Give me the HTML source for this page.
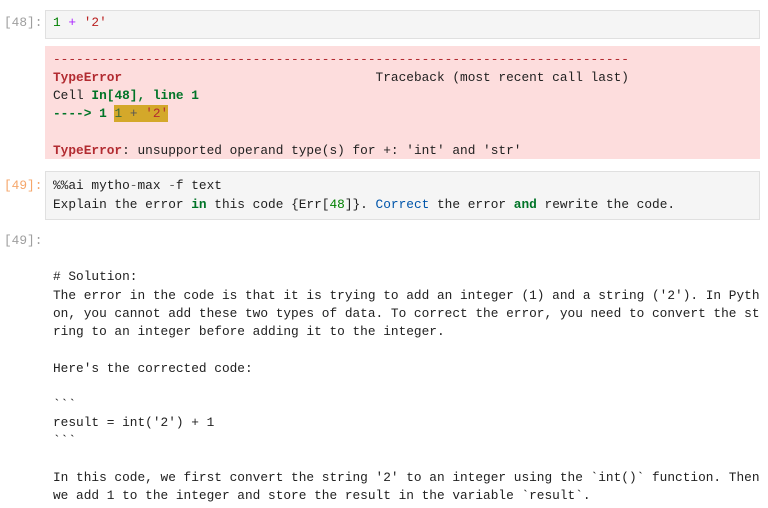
<!DOCTYPE html>
<html><head><meta charset="utf-8"><style>
body{margin:0;width:768px;height:508px;background:#fff;overflow:hidden;position:relative;font-family:"Liberation Mono","DejaVu Sans Mono",monospace;font-size:12.8px;color:#212121}
.l{position:absolute;left:53px;white-space:pre;line-height:18px;height:18px}
.p{position:absolute;left:4px;white-space:pre;line-height:18px;color:#9e9e9e}
.box{position:absolute;left:45px;width:715px}
.g{color:#008000}.pu{color:#aa22ff}.r{color:#ba2121}.b{font-weight:bold}
.er{color:#b22b31;font-weight:bold}.gr{color:#007427;font-weight:bold}
</style></head><body>
<div class="p" style="top:14px">[48]:</div>
<div class="box" style="top:10px;height:29px;background:#f5f5f5;border:1px solid #e0e0e0;box-sizing:border-box"></div>
<div class="l" style="top:14px"><span class="g">1</span> <span class="pu">+</span> <span class="r">'2'</span></div>
<div class="box" style="top:46px;height:113px;background:#fddddd"></div>
<div class="l" style="top:51px;color:#b22b31">---------------------------------------------------------------------------</div>
<div class="l" style="top:69px"><span class="er">TypeError</span>                                 Traceback (most recent call last)</div>
<div class="l" style="top:87px">Cell <span class="gr">In[48], line 1</span></div>
<div class="l" style="top:105px"><span class="gr">----&gt; 1</span> <span style="background:#d4a82a;color:#555;padding:1px 0"><span style="color:#3a6b3a">1</span> + <span style="color:#b22b31">'2'</span></span></div>
<div class="l" style="top:142px"><span class="er">TypeError</span>: unsupported operand type(s) for +: 'int' and 'str'</div>
<div class="p" style="top:177px;color:#f5a66a">[49]:</div>
<div class="box" style="top:171px;height:49px;background:#f5f5f5;border:1px solid #e0e0e0;box-sizing:border-box"></div>
<div class="l" style="top:177px">%%ai mytho<span style="color:#666">-</span>max <span style="color:#666">-</span>f text</div>
<div class="l" style="top:196px">Explain the error <span class="gr">in</span> this code {Err[<span class="g">48</span>]}. <span style="color:#0055aa">Correct</span> the error <span class="gr">and</span> rewrite the code.</div>
<div class="p" style="top:232px">[49]:</div>
<div class="l" style="top:268px"># Solution:</div>
<div class="l" style="top:287px">The error in the code is that it is trying to add an integer (1) and a string ('2'). In Pyth</div>
<div class="l" style="top:305px">on, you cannot add these two types of data. To correct the error, you need to convert the st</div>
<div class="l" style="top:323px">ring to an integer before adding it to the integer.</div>
<div class="l" style="top:360px">Here's the corrected code:</div>
<div class="l" style="top:396px">&#96;&#96;&#96;</div>
<div class="l" style="top:414px">result = int('2') + 1</div>
<div class="l" style="top:432px">&#96;&#96;&#96;</div>
<div class="l" style="top:469px">In this code, we first convert the string '2' to an integer using the &#96;int()&#96; function. Then</div>
<div class="l" style="top:487px">we add 1 to the integer and store the result in the variable &#96;result&#96;.</div>
</body></html>
